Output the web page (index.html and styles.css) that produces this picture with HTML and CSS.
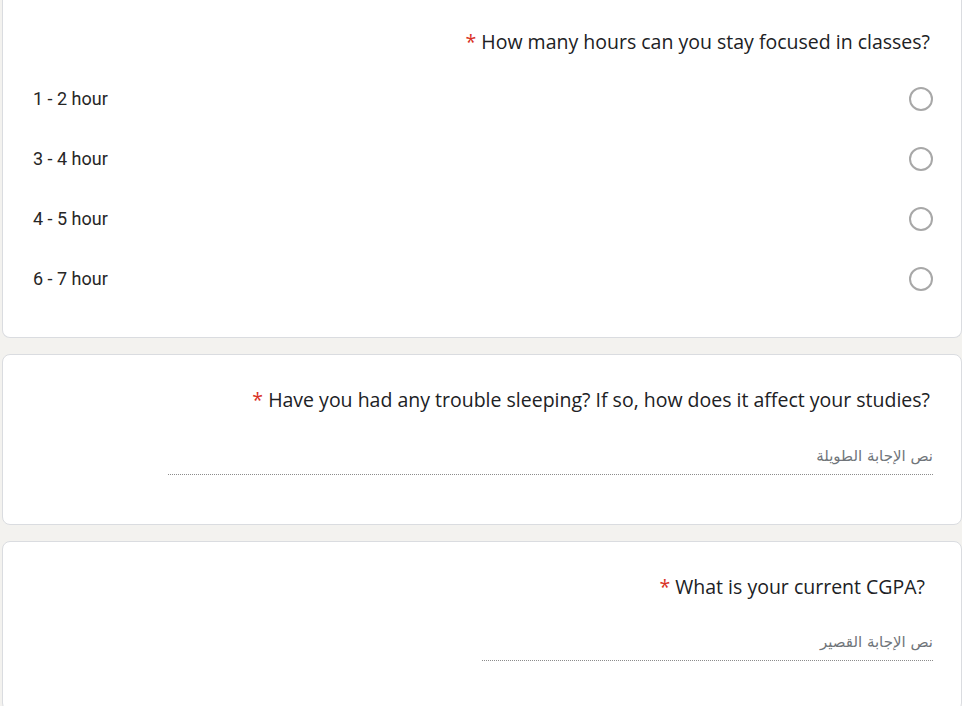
FILE: index.html
```html
<!DOCTYPE html>
<html lang="ar" dir="rtl">
<head>
    <meta charset="UTF-8">
    <meta name="viewport" content="width=device-width, initial-scale=1.0">
    <title>Form</title>
    <link rel="stylesheet" href="styles.css">
</head>
<body>

    <div class="form-list">
        <div class="card cut">
            <div class="question-title"><span dir="ltr">How many hours can you stay focused in classes?</span> <span class="required">*</span></div>
            <div class="options">
                <label class="option"><span class="radio"></span><span class="option-label" dir="ltr">1 - 2 hour</span></label>
                <label class="option"><span class="radio"></span><span class="option-label" dir="ltr">3 - 4 hour</span></label>
                <label class="option"><span class="radio"></span><span class="option-label" dir="ltr">4 - 5 hour</span></label>
                <label class="option"><span class="radio"></span><span class="option-label" dir="ltr">6 - 7 hour</span></label>
            </div>
        </div>

        <div class="card">
            <div class="question-title"><span dir="ltr">Have you had any trouble sleeping? If so, how does it affect your studies?</span> <span class="required">*</span></div>
            <div class="answer long">نص الإجابة الطويلة</div>
        </div>

        <div class="card">
            <div class="question-title short-title"><span dir="ltr">What is your current CGPA?</span> <span class="required">*</span></div>
            <div class="answer short">نص الإجابة القصير</div>
        </div>
    </div>

</body>
</html>
```

FILE: styles.css
```css
body {
    margin: 0;
    padding: 0;
    background-color: #f3f2ef;
    font-family: Roboto, Arial, sans-serif;
    color: #202124;
    height: 100vh;
    overflow: hidden;
}
.form-list {
    padding-right: 0;
    padding-left: 2px;
}
.card {
    background-color: #fff;
    border: 1px solid #dadce0;
    border-radius: 8px;
    margin-bottom: 16px;
    padding: 27px 31px 49px 30px;
}
.card.cut {
    border-top: 0;
    border-radius: 0 0 8px 8px;
    padding-top: 24px;
    padding-bottom: 29px;
}
.question-title {
    font-family: "Open Sans", Arial, sans-serif;
    font-size: 19.5px;
    line-height: 36px;
    color: #202124;
    padding-right: 0;
}
.short-title {
    padding-right: 5px;
}
.required {
    color: #d93025;
}
.options {
    margin-top: 8px;
}
.option {
    display: flex;
    justify-content: space-between;
    align-items: center;
    height: 60px;
}
.radio {
    width: 20px;
    height: 20px;
    border: 2px solid #a8a8a8;
    border-radius: 50%;
    margin-right: -3px;
    margin-top: 2px;
}
.option-label {
    font-size: 18px;
    color: #262626;
}
.answer {
    font-family: "DejaVu Sans", Arial, sans-serif;
    font-size: 15px;
    line-height: 24px;
    color: #70757a;
    padding-bottom: 6px;
    border-bottom: 1px dotted rgba(0, 0, 0, 0.45);
    margin-top: 26px;
    margin-right: -3px;
}
.answer.long {
    width: 765px;
}
.answer.short {
    width: 451px;
    margin-top: 25px;
}
```
